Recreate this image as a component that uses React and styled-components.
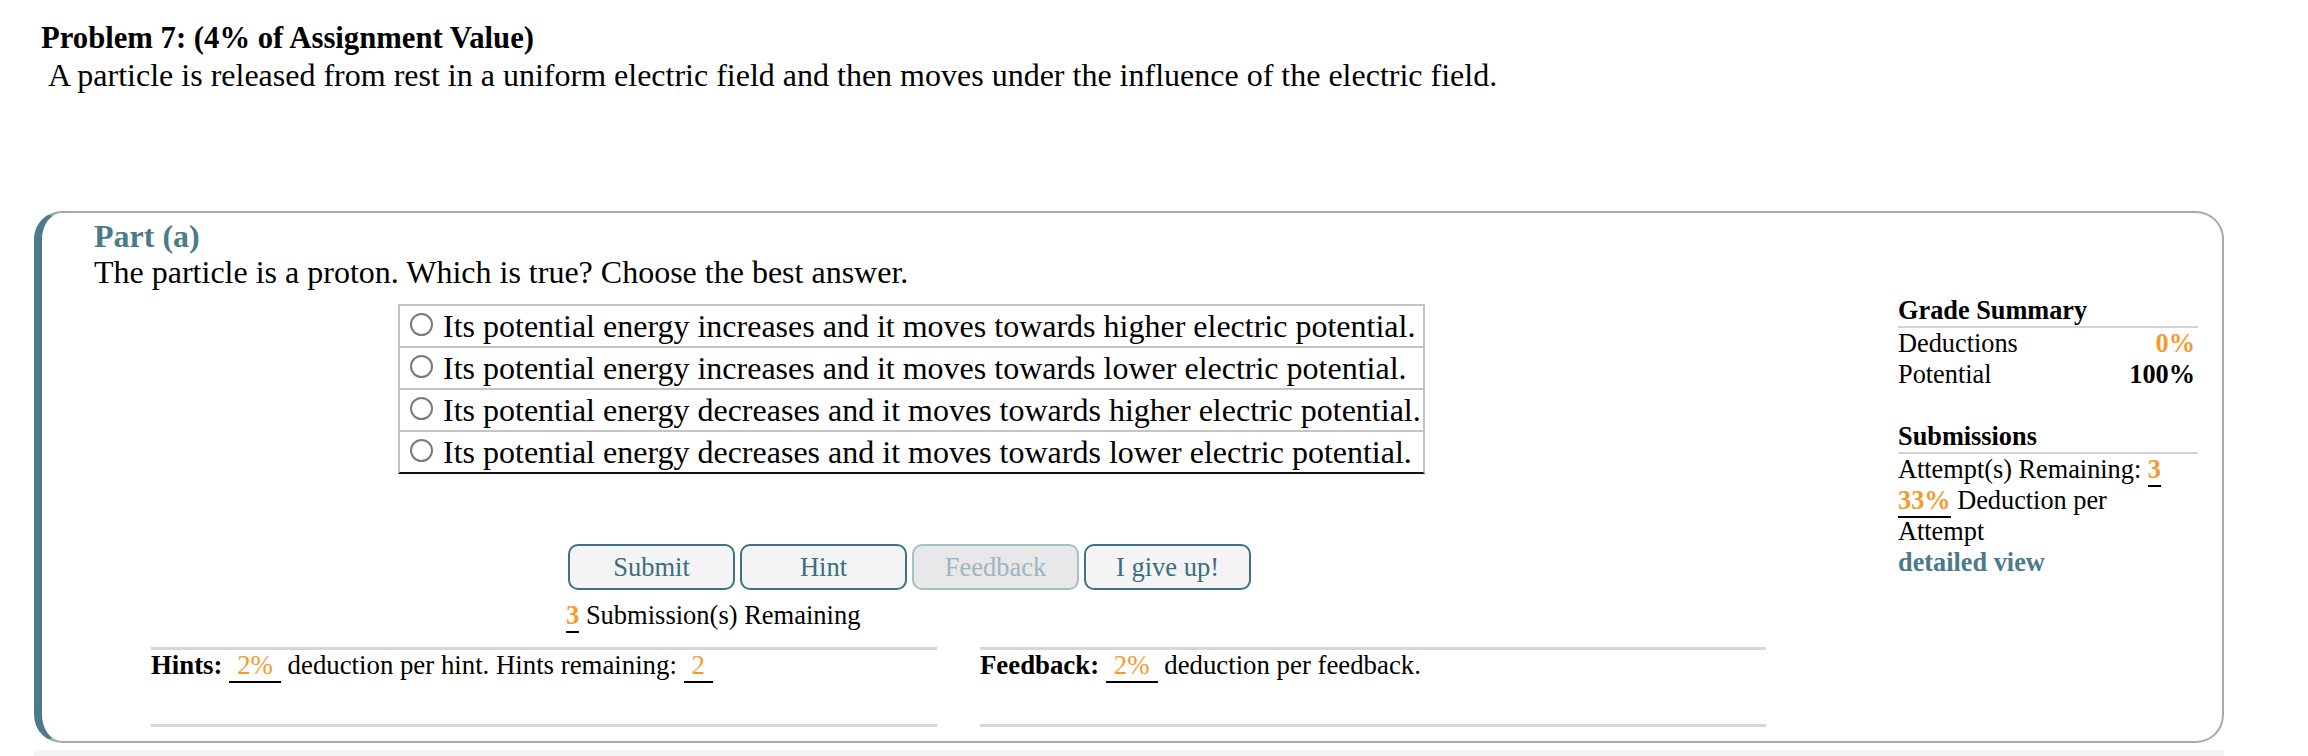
import React from "react";
import styled, { createGlobalStyle } from "styled-components";

const GlobalStyle = createGlobalStyle`
  html, body { margin: 0; padding: 0; background: #ffffff; }
  body {
    font-family: "Liberation Serif", "Times New Roman", serif;
    color: #000;
  }
  * { box-sizing: border-box; }
`;

const TEAL = "#4b7b89";
const ORANGE = "#f39b30";

const Page = styled.div`
  padding-top: 20px;
  width: 2308px;
`;

const ProblemTitle = styled.h2`
  margin: 0;
  padding-left: 41px;
  font-size: 30.7px;
  line-height: 36px;
  font-weight: bold;
`;

const Intro = styled.p`
  margin: 0;
  padding-left: 48px;
  font-size: 32px;
  line-height: 38px;
`;

const Card = styled.section`
  margin: 117px 0 0 34px;
  width: 2190px;
  display: flex;
  border: 2px solid #a9a9a9;
  border-left: 8px solid ${TEAL};
  border-radius: 28px;
  padding-bottom: 14px;
`;

const Main = styled.div`
  flex: 1;
  padding: 5px 0 0 52px;
`;

const PartTitle = styled.div`
  color: ${TEAL};
  font-size: 32px;
  line-height: 36px;
  font-weight: bold;
`;

const Question = styled.div`
  font-size: 32px;
  line-height: 36px;
`;

const Choices = styled.div`
  margin: 14px 0 0 304px;
  width: fit-content;
  border-left: 2px solid #c4c4c4;
  border-right: 2px solid #c4c4c4;
  border-bottom: 2px solid #111;
`;

const Choice = styled.label`
  display: flex;
  align-items: flex-start;
  height: 42px;
  border-top: 2px solid #c4c4c4;
  padding-right: 2px;
  font-size: 32px;
  line-height: 40px;
  white-space: nowrap;
  cursor: pointer;
`;

const Radio = styled.span`
  flex: none;
  width: 23px;
  height: 23px;
  margin: 7px 10px 0 10px;
  border-radius: 50%;
  border: 2px solid #7a7a7a;
  background: #fff;
`;

const ButtonRow = styled.div`
  margin: 70px 0 0 474px;
  display: flex;
  gap: 5px;
`;

const Button = styled.button`
  width: 167px;
  height: 46px;
  border: 2px solid ${(p) => (p.disabled ? "#a7bfc7" : "#3f7185")};
  border-radius: 10px;
  background: ${(p) => (p.disabled ? "#e8e8e8" : "#f4f4f4")};
  color: ${(p) => (p.disabled ? "#9db6bf" : "#3b6d81")};
  font-family: "Liberation Serif", "Times New Roman", serif;
  font-size: 26.5px;
  padding: 0;
  cursor: ${(p) => (p.disabled ? "default" : "pointer")};
`;

const Remaining = styled.div`
  margin: 10px 0 0 472px;
  font-size: 26.5px;
  line-height: 31px;
`;

const Count = styled.span`
  color: ${ORANGE};
  font-weight: ${(p) => (p.$bold ? "bold" : "normal")};
  border-bottom: 2px solid #000;
  padding: 0 ${(p) => p.$pad || 0}px 1px;
`;

const HintGrid = styled.div`
  margin: 16px 0 0 57px;
  display: grid;
  grid-template-columns: 786px 786px;
  column-gap: 43px;
`;

const HintBox = styled.div`
  height: 80px;
  border-top: 3px solid #d6d6d6;
  border-bottom: 3px solid #d6d6d6;
  font-size: 26.8px;
  line-height: 31px;
`;

const Side = styled.aside`
  flex: none;
  width: 300px;
  margin-right: 24px;
  padding-top: 82px;
  font-size: 26.3px;
  line-height: 31px;
`;

const SideTitle = styled.div`
  font-weight: bold;
  border-bottom: 2px solid #d3d3d3;
  margin-top: ${(p) => p.$gap || 0}px;
`;

const SideRow = styled.div`
  display: flex;
  justify-content: space-between;
  padding-right: 3px;
`;

const Value = styled.span`
  font-weight: bold;
  color: ${(p) => p.$color || "#000"};
`;

const DeductionLine = styled.div`
  max-width: 260px;
`;

const DetailLink = styled.a`
  display: block;
  color: ${TEAL};
  font-weight: bold;
  text-decoration: none;
`;

const Footer = styled.div`
  margin: 7px 0 0 34px;
  width: 2190px;
  height: 12px;
  background: #f4f4f4;
`;

const choices = [
  "Its potential energy increases and it moves towards higher electric potential.",
  "Its potential energy increases and it moves towards lower electric potential.",
  "Its potential energy decreases and it moves towards higher electric potential.",
  "Its potential energy decreases and it moves towards lower electric potential.",
];

export default function App() {
  return (
    <Page>
      <GlobalStyle />
      <ProblemTitle>Problem 7: (4% of Assignment Value)</ProblemTitle>
      <Intro>
        A particle is released from rest in a uniform electric field and then moves under the influence of the electric field.
      </Intro>
      <Card>
        <Main>
          <PartTitle>Part (a)</PartTitle>
          <Question>The particle is a proton. Which is true? Choose the best answer.</Question>
          <Choices>
            {choices.map((c) => (
              <Choice key={c}>
                <Radio />
                {c}
              </Choice>
            ))}
          </Choices>
          <ButtonRow>
            <Button>Submit</Button>
            <Button>Hint</Button>
            <Button disabled>Feedback</Button>
            <Button>I give up!</Button>
          </ButtonRow>
          <Remaining>
            <Count $bold>3</Count> Submission(s) Remaining
          </Remaining>
          <HintGrid>
            <HintBox>
              <b>Hints:</b> <Count $pad={8}>2%</Count> deduction per hint. Hints remaining: <Count $pad={8}>2</Count>
            </HintBox>
            <HintBox>
              <b>Feedback:</b> <Count $pad={8}>2%</Count> deduction per feedback.
            </HintBox>
          </HintGrid>
        </Main>
        <Side>
          <SideTitle>Grade Summary</SideTitle>
          <SideRow>
            <span>Deductions</span>
            <Value $color={ORANGE}>0%</Value>
          </SideRow>
          <SideRow>
            <span>Potential</span>
            <Value>100%</Value>
          </SideRow>
          <SideTitle $gap={31}>Submissions</SideTitle>
          <div>
            Attempt(s) Remaining: <Count $bold>3</Count>
          </div>
          <DeductionLine>
            <Count $bold>33%</Count> Deduction per Attempt
          </DeductionLine>
          <DetailLink href="#">detailed view</DetailLink>
        </Side>
      </Card>
      <Footer />
    </Page>
  );
}
